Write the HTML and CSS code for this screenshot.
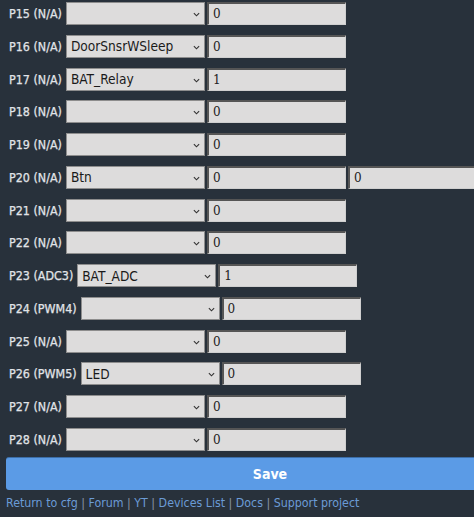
FILE: index.html
```html
<!DOCTYPE html>
<html>
<head>
<meta charset="utf-8">
<link rel="stylesheet" href="styles.css">
</head>
<body>
<div class="page">
  <div class="rows">
    <div class="row"><span class="lbl">P15 (N/A)</span><span class="sel"><select class="s"><option></option></select><svg class="chev" viewBox="0 0 8 5"><path d="M1 1 L4 4 L7 1" fill="none" stroke="#333" stroke-width="1.3"/></svg></span><input class="inp" value="0"></div>
    <div class="row"><span class="lbl">P16 (N/A)</span><span class="sel"><select class="s"><option>DoorSnsrWSleep</option></select><svg class="chev" viewBox="0 0 8 5"><path d="M1 1 L4 4 L7 1" fill="none" stroke="#333" stroke-width="1.3"/></svg></span><input class="inp" value="0"></div>
    <div class="row"><span class="lbl">P17 (N/A)</span><span class="sel"><select class="s"><option>BAT_Relay</option></select><svg class="chev" viewBox="0 0 8 5"><path d="M1 1 L4 4 L7 1" fill="none" stroke="#333" stroke-width="1.3"/></svg></span><input class="inp" value="1"></div>
    <div class="row"><span class="lbl">P18 (N/A)</span><span class="sel"><select class="s"><option></option></select><svg class="chev" viewBox="0 0 8 5"><path d="M1 1 L4 4 L7 1" fill="none" stroke="#333" stroke-width="1.3"/></svg></span><input class="inp" value="0"></div>
    <div class="row"><span class="lbl">P19 (N/A)</span><span class="sel"><select class="s"><option></option></select><svg class="chev" viewBox="0 0 8 5"><path d="M1 1 L4 4 L7 1" fill="none" stroke="#333" stroke-width="1.3"/></svg></span><input class="inp" value="0"></div>
    <div class="row"><span class="lbl">P20 (N/A)</span><span class="sel"><select class="s"><option>Btn</option></select><svg class="chev" viewBox="0 0 8 5"><path d="M1 1 L4 4 L7 1" fill="none" stroke="#333" stroke-width="1.3"/></svg></span><input class="inp" value="0"><input class="inp" value="0"></div>
    <div class="row"><span class="lbl">P21 (N/A)</span><span class="sel"><select class="s"><option></option></select><svg class="chev" viewBox="0 0 8 5"><path d="M1 1 L4 4 L7 1" fill="none" stroke="#333" stroke-width="1.3"/></svg></span><input class="inp" value="0"></div>
    <div class="row"><span class="lbl">P22 (N/A)</span><span class="sel"><select class="s"><option></option></select><svg class="chev" viewBox="0 0 8 5"><path d="M1 1 L4 4 L7 1" fill="none" stroke="#333" stroke-width="1.3"/></svg></span><input class="inp" value="0"></div>
    <div class="row"><span class="lbl">P23 (ADC3)</span><span class="sel"><select class="s"><option>BAT_ADC</option></select><svg class="chev" viewBox="0 0 8 5"><path d="M1 1 L4 4 L7 1" fill="none" stroke="#333" stroke-width="1.3"/></svg></span><input class="inp" value="1"></div>
    <div class="row"><span class="lbl">P24 (PWM4)</span><span class="sel"><select class="s"><option></option></select><svg class="chev" viewBox="0 0 8 5"><path d="M1 1 L4 4 L7 1" fill="none" stroke="#333" stroke-width="1.3"/></svg></span><input class="inp" value="0"></div>
    <div class="row"><span class="lbl">P25 (N/A)</span><span class="sel"><select class="s"><option></option></select><svg class="chev" viewBox="0 0 8 5"><path d="M1 1 L4 4 L7 1" fill="none" stroke="#333" stroke-width="1.3"/></svg></span><input class="inp" value="0"></div>
    <div class="row"><span class="lbl">P26 (PWM5)</span><span class="sel"><select class="s"><option>LED</option></select><svg class="chev" viewBox="0 0 8 5"><path d="M1 1 L4 4 L7 1" fill="none" stroke="#333" stroke-width="1.3"/></svg></span><input class="inp" value="0"></div>
    <div class="row"><span class="lbl">P27 (N/A)</span><span class="sel"><select class="s"><option></option></select><svg class="chev" viewBox="0 0 8 5"><path d="M1 1 L4 4 L7 1" fill="none" stroke="#333" stroke-width="1.3"/></svg></span><input class="inp" value="0"></div>
    <div class="row"><span class="lbl">P28 (N/A)</span><span class="sel"><select class="s"><option></option></select><svg class="chev" viewBox="0 0 8 5"><path d="M1 1 L4 4 L7 1" fill="none" stroke="#333" stroke-width="1.3"/></svg></span><input class="inp" value="0"></div>
  </div>
  <button class="save">Save</button>
  <div class="links"><a href="#">Return to cfg</a> | <a href="#">Forum</a> | <a href="#">YT</a> | <a href="#">Devices List</a> | <a href="#">Docs</a> | <a href="#">Support project</a></div>
</div>
</body>
</html>
```
FILE: styles.css
```css
html, body {
  margin: 0;
  padding: 0;
  background: #28313b;
  overflow: hidden;
}
.page {
  width: 528px;
  padding: 2px 6px 0 6px;
  font-family: "DejaVu Sans Condensed", "DejaVu Sans", sans-serif;
}
.rows {
  display: flex;
  flex-direction: column;
  gap: 9.77px;
}
.row {
  display: flex;
  align-items: center;
  height: 23px;
  white-space: nowrap;
}
.lbl {
  color: #e1e4e8;
  font-size: 12.4px;
  -webkit-text-stroke: 0.25px #e1e4e8;
  padding-left: 3px;
  margin-right: 4px;
}
.sel {
  position: relative;
  display: inline-block;
  height: 23px;
}
.s {
  appearance: none;
  -webkit-appearance: none;
  width: 139px;
  height: 23px;
  margin: 0;
  padding: 0 0 0 4px;
  background: #dddcdc;
  border: 1px solid #8d8d8d;
  border-radius: 0;
  font-family: "DejaVu Sans Condensed", "DejaVu Sans", sans-serif;
  font-size: 13.6px;
  color: #1a1a1a;
}
.chev {
  position: absolute;
  right: 5px;
  top: 10px;
  width: 7px;
  height: 5px;
}
.inp {
  width: 139px;
  height: 23px;
  box-sizing: border-box;
  margin: 0 0 0 2px;
  padding: 0 0 0 4px;
  background: #dddcdc;
  border: 1px solid;
  border-color: #555 #cfcfcf #cfcfcf #555;
  border-width: 2px 1px 1px 2px;
  font-family: "DejaVu Serif", serif;
  font-size: 12px;
  color: #222;
}
.save {
  display: block;
  width: 528px;
  height: 33px;
  margin-top: 6px;
  background: #5b9be6;
  border: none;
  border-top: 1px solid #3c6ea8;
  border-radius: 3px;
  color: #fff;
  font-family: "DejaVu Sans Condensed", "DejaVu Sans", sans-serif;
  font-weight: bold;
  font-size: 14px;
}
.links {
  margin-top: 6px;
  color: #8a95a6;
  font-size: 12.3px;
}
.links a {
  color: #6b9bd6;
  text-decoration: none;
}
```
